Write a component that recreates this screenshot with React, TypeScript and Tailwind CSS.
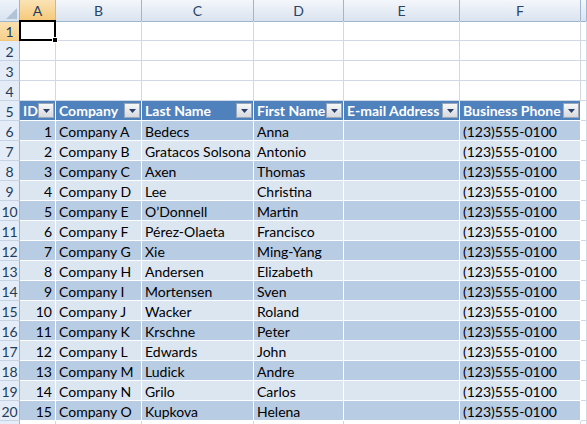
import React from "react";

const rows = [
  ["1", "Company A", "Bedecs", "Anna"],
  ["2", "Company B", "Gratacos Solsona", "Antonio"],
  ["3", "Company C", "Axen", "Thomas"],
  ["4", "Company D", "Lee", "Christina"],
  ["5", "Company E", "O’Donnell", "Martin"],
  ["6", "Company F", "Pérez-Olaeta", "Francisco"],
  ["7", "Company G", "Xie", "Ming-Yang"],
  ["8", "Company H", "Andersen", "Elizabeth"],
  ["9", "Company I", "Mortensen", "Sven"],
  ["10", "Company J", "Wacker", "Roland"],
  ["11", "Company K", "Krschne", "Peter"],
  ["12", "Company L", "Edwards", "John"],
  ["13", "Company M", "Ludick", "Andre"],
  ["14", "Company N", "Grilo", "Carlos"],
  ["15", "Company O", "Kupkova", "Helena"],
];

const letters = ["A", "B", "C", "D", "E", "F", ""];
const headers = ["ID", "Company", "Last Name", "First Name", "E-mail Address", "Business Phone"];
const gridCols = "grid grid-cols-[20px_36px_86px_112px_90px_116px_121px_1fr]";

function FilterButton() {
  return (
    <span className="flex h-[15px] w-[16px] shrink-0 items-center justify-center border border-[#9aa7b8] bg-gradient-to-b from-[#f7f7f7] to-[#d6d9de]">
      <svg width="7" height="4" viewBox="0 0 7 4">
        <path d="M0 0h7L3.5 4z" fill="#2b3f6b" />
      </svg>
    </span>
  );
}

function RowHeader({ n, active }: { n?: number; active?: boolean }) {
  return (
    <div
      className={`flex items-end justify-center border-r border-b pb-[1px] text-[14px] leading-none ${
        active
          ? "border-r-[#f2b24a] border-b-[#f2c77a] bg-gradient-to-b from-[#fbe2b4] to-[#f6cf8a] text-[#1f3b5c]"
          : "border-r-[#9eb6ce] border-b-[#c5d3e4] bg-[#e4ecf7] text-[#1f3b5c]"
      }`}
    >
      {n}
    </div>
  );
}

export default function App() {
  return (
    <div
      className="h-[424px] w-[587px] overflow-hidden bg-white text-[14px] text-black"
      style={{ fontFamily: "Lato, 'Open Sans', sans-serif" }}
    >
      {/* Column headers */}
      <div className={`${gridCols} h-[21px]`}>
        <div className="relative border-r border-b border-[#9eb6ce] bg-gradient-to-b from-[#eef3fa] to-[#d9e3f0]">
          <svg className="absolute right-[2px] bottom-[2px]" width="11" height="11" viewBox="0 0 11 11">
            <path d="M11 0v11H0z" fill="#b3c3d7" />
          </svg>
        </div>
        {letters.map((l, i) => (
          <div
            key={i}
            className={`flex items-center justify-center border-r border-b text-[14px] ${
              i === 0
                ? "border-r-[#f2b24a] border-b-[#e8a43b] bg-gradient-to-b from-[#fbe3b6] to-[#f5c877] text-[#1f3b5c]"
                : "border-[#9eb6ce] bg-gradient-to-b from-[#f4f7fb] to-[#dae3ef] text-[#2a4467]"
            }`}
          >
            {l}
          </div>
        ))}
      </div>

      {/* Empty rows 1-4 */}
      {[1, 2, 3, 4].map((n) => (
        <div key={n} className={`${gridCols} h-[20px]`}>
          <RowHeader n={n} active={n === 1} />
          {letters.map((_, i) => (
            <div key={i} className="relative border-r border-b border-[#d0d7e5]">
              {n === 1 && i === 0 && (
                <>
                  <div className="absolute -top-[1px] -left-[1px] z-10 h-[21px] w-[37px] border-2 border-black" />
                  <div className="absolute -right-[3px] -bottom-[3px] z-10 h-[6px] w-[6px] border border-white bg-black" />
                </>
              )}
            </div>
          ))}
        </div>
      ))}

      {/* Table header row 5 */}
      <div className={`${gridCols} h-[20px]`}>
        <RowHeader n={5} />
        {headers.map((h) => (
          <div
            key={h}
            className="flex items-center justify-between border-r border-b border-white bg-[#4f81bd] pr-[1px] pl-[3px] font-bold text-white"
          >
            <span className="whitespace-nowrap leading-none">{h}</span>
            <FilterButton />
          </div>
        ))}
        <div className="border-r border-b border-[#d0d7e5]" />
      </div>

      {/* Data rows */}
      {rows.map((r, idx) => {
        const bg = idx % 2 === 0 ? "bg-[#b8cce4]" : "bg-[#dce6f1]";
        const cell = `flex items-end whitespace-nowrap border-r border-b border-white pb-[1px] leading-none ${bg}`;
        return (
          <div key={idx} className={`${gridCols} h-[20px]`}>
            <RowHeader n={idx + 6} />
            <div className={`${cell} justify-end pr-[3px]`}>{r[0]}</div>
            <div className={`${cell} pl-[3px]`}>{r[1]}</div>
            <div className={`${cell} pl-[3px]`}>{r[2]}</div>
            <div className={`${cell} pl-[3px]`}>{r[3]}</div>
            <div className={cell} />
            <div className={`${cell} pl-[3px]`}>(123)555-0100</div>
            <div className="border-r border-b border-[#d0d7e5]" />
          </div>
        );
      })}

      {/* Row 21, cut off by the window */}
      <div className={`${gridCols} h-[20px]`}>
        <RowHeader />
        {letters.map((_, i) => (
          <div key={i} className="border-r border-b border-[#d0d7e5]" />
        ))}
      </div>
    </div>
  );
}
